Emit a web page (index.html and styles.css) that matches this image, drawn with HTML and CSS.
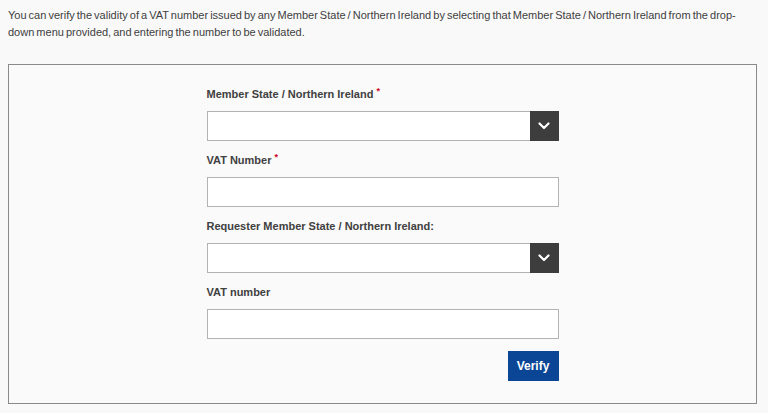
FILE: index.html
```html
<!DOCTYPE html>
<html lang="en">
<head>
<meta charset="utf-8">
<title>VAT number validation</title>
<link rel="stylesheet" href="styles.css">
</head>
<body>
<p class="intro">You can verify the validity of a VAT number issued by any Member State / Northern Ireland by selecting that Member State / Northern Ireland from the drop-down menu provided, and entering the number to be validated.</p>
<div class="panel">
  <form class="form">
    <div class="field">
      <label class="label">Member State / Northern Ireland<span class="req">*</span></label>
      <div class="select">
        <div class="select-box"></div>
        <div class="select-btn">
          <svg width="12" height="8" viewBox="0 0 12 8"><path d="M1.5 1.5 L6 6 L10.5 1.5" fill="none" stroke="#fff" stroke-width="2.2" stroke-linecap="round" stroke-linejoin="round"/></svg>
        </div>
      </div>
    </div>
    <div class="field">
      <label class="label">VAT Number<span class="req">*</span></label>
      <div class="input"></div>
    </div>
    <div class="field">
      <label class="label">Requester Member State / Northern Ireland:</label>
      <div class="select">
        <div class="select-box"></div>
        <div class="select-btn">
          <svg width="12" height="8" viewBox="0 0 12 8"><path d="M1.5 1.5 L6 6 L10.5 1.5" fill="none" stroke="#fff" stroke-width="2.2" stroke-linecap="round" stroke-linejoin="round"/></svg>
        </div>
      </div>
    </div>
    <div class="field">
      <label class="label">VAT number</label>
      <div class="input"></div>
    </div>
    <div class="actions">
      <button type="button" class="btn">Verify</button>
    </div>
  </form>
</div>
</body>
</html>
```
FILE: styles.css
```css
html, body {
  margin: 0;
  padding: 0;
  background: #f9f9f9;
}
body {
  padding: 0 11px 0 8px;
  font-family: "Liberation Sans", Arial, sans-serif;
  color: #404040;
}
.intro {
  margin: 7px 0 0;
  font-size: 11px;
  line-height: 17px;
  word-spacing: -1px;
}
.panel {
  margin-top: 23px;
  border: 1px solid #8a8a8a;
  background: #fafafa;
  padding: 21px 0 22px;
  display: flex;
  justify-content: center;
}
.form {
  width: 352px;
  display: flex;
  flex-direction: column;
  gap: 11px;
}
.field {
  display: flex;
  flex-direction: column;
  gap: 9px;
}
.label {
  font-size: 11px;
  font-weight: bold;
  line-height: 16px;
  color: #404040;
}
.req {
  color: #d0021b;
  font-size: 9px;
  vertical-align: top;
  margin-left: 3px;
  line-height: 10px;
}
.select {
  display: flex;
  height: 30px;
  box-sizing: border-box;
  border: 1px solid #b3b3b3;
  background: #fff;
}
.select-box {
  flex: 1;
}
.select-btn {
  width: 29px;
  margin: -1px -1px -1px 0;
  background: #3d3d3d;
  display: flex;
  align-items: center;
  justify-content: center;
}
.input {
  height: 30px;
  box-sizing: border-box;
  border: 1px solid #b3b3b3;
  background: #fff;
}
.actions {
  display: flex;
  justify-content: flex-end;
  padding-top: 1px;
}
.btn {
  width: 51px;
  height: 30px;
  border: 0;
  background: #0b4596;
  color: #fff;
  font-family: "Liberation Sans", Arial, sans-serif;
  font-weight: bold;
  font-size: 12px;
  padding: 0;
}
```
